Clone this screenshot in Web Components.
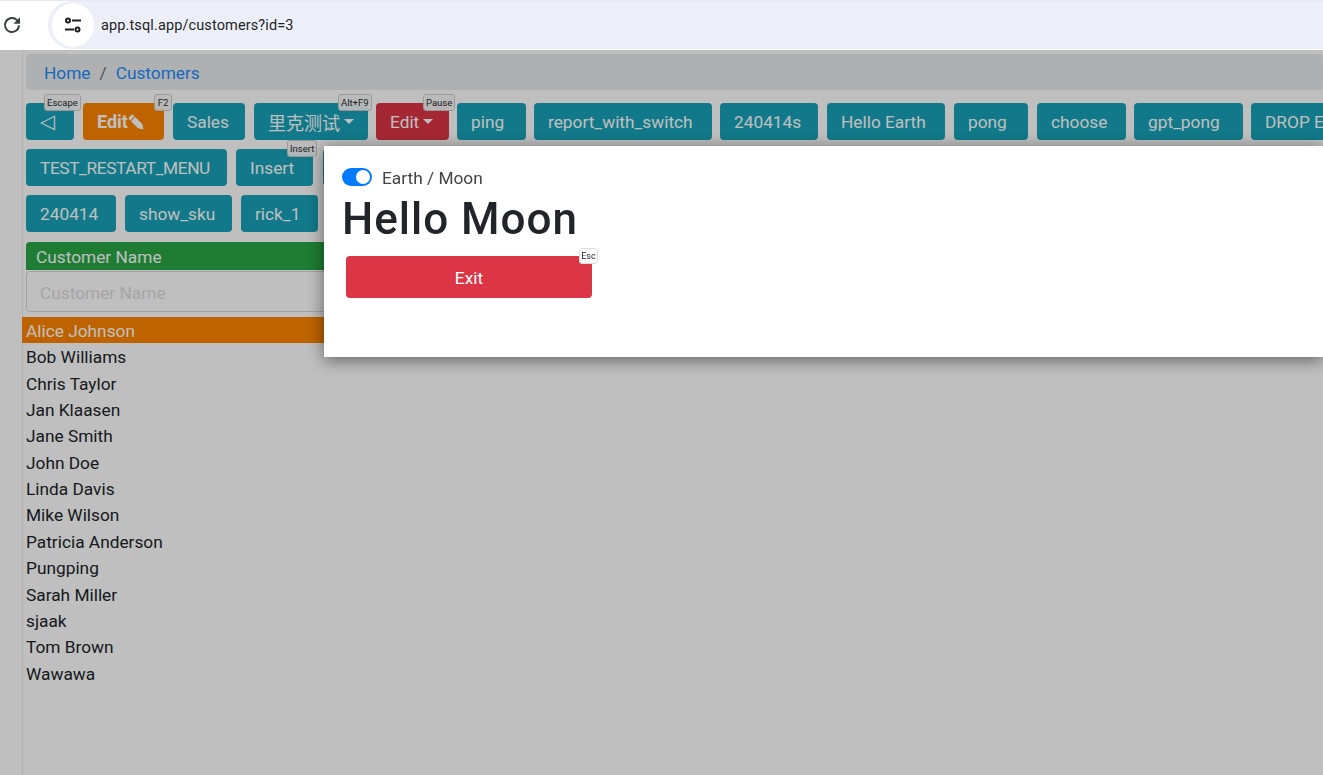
<!DOCTYPE html>
<html><head><meta charset="utf-8"><style>
html,body{margin:0;height:100%;overflow:hidden;background:#fff}
body{font-family:"Roboto","Noto Sans CJK SC",sans-serif;font-size:17.3px;color:#212529}
</style></head><body>
<browser-bar url="app.tsql.app/customers?id=3"></browser-bar>
<app-page>
  <bread-crumb slot="crumb"></bread-crumb>
  <button-row>
    <tsql-btn w="48" badge="Escape" bx="18"><span style="font:19.5px 'DejaVu Sans'">◁</span></tsql-btn>
    <tsql-btn w="81" kind="orange" badge="F2" bx="71"><b style="font-weight:700;font-size:18px">Edit</b><pencil-icon></pencil-icon></tsql-btn>
    <tsql-btn w="72">Sales</tsql-btn>
    <tsql-btn w="114" g="8" caret badge="Alt+F9" bx="84"><span style="font-size:18px">里克测试</span></tsql-btn>
    <tsql-btn w="73" g="8" kind="red" caret badge="Pause" bx="47">Edit</tsql-btn>
    <tsql-btn w="69" g="8">ping</tsql-btn>
    <tsql-btn w="178" g="8">report_with_switch</tsql-btn>
    <tsql-btn w="98">240414s</tsql-btn>
    <tsql-btn w="118">Hello Earth</tsql-btn>
    <tsql-btn w="74">pong</tsql-btn>
    <tsql-btn w="89" g="8">choose</tsql-btn>
    <tsql-btn w="109" g="8">gpt_pong</tsql-btn>
    <tsql-btn w="72" g="0" cut>DROP E</tsql-btn>
  </button-row>
  <button-row>
    <tsql-btn w="201"><span style="letter-spacing:-.4px">TEST_RESTART_MENU</span></tsql-btn>
    <tsql-btn w="77" g="10" badge="Insert" bx="51">Insert</tsql-btn>
    <tsql-btn w="90">Delete</tsql-btn>
  </button-row>
  <button-row>
    <tsql-btn w="90">240414</tsql-btn>
    <tsql-btn w="107">show_sku</tsql-btn>
    <tsql-btn w="77">rick_1</tsql-btn>
  </button-row>
  <search-field label="Customer Name"></search-field>
  <customer-list>
    <list-row active>Alice Johnson</list-row>
    <list-row>Bob Williams</list-row>
    <list-row>Chris Taylor</list-row>
    <list-row>Jan Klaasen</list-row>
    <list-row>Jane Smith</list-row>
    <list-row>John Doe</list-row>
    <list-row>Linda Davis</list-row>
    <list-row>Mike Wilson</list-row>
    <list-row>Patricia Anderson</list-row>
    <list-row>Pungping</list-row>
    <list-row>Sarah Miller</list-row>
    <list-row>sjaak</list-row>
    <list-row>Tom Brown</list-row>
    <list-row>Wawawa</list-row>
  </customer-list>
</app-page>
<modal-dialog></modal-dialog>
<script>
function def(name, html){
  customElements.define(name, class extends HTMLElement{
    constructor(){super();this.attachShadow({mode:'open'});}
    connectedCallback(){
      const a=n=>this.getAttribute(n);
      this.shadowRoot.innerHTML = typeof html==='function'?html(a,this):html;
    }
  });
}
def('browser-bar',a=>`<style>
:host{display:flex;height:50px;background:#fff;box-sizing:border-box;border-top:1px solid #e6e9f3;border-bottom:1px solid #fff}
.reload{width:24px;display:flex;align-items:center;justify-content:center;flex:none}
.omni{margin-left:24px;flex:1;background:#eceff8;display:flex;align-items:center;border-radius:24px 0 0 24px}
.chip{width:42px;height:44px;margin-left:4px;background:#fff;border-radius:50%;display:flex;align-items:center;justify-content:center;flex:none}
.url{margin-left:7px;font:14.5px "Roboto","Liberation Sans",sans-serif;color:#1f1f1f;letter-spacing:.12px}
</style>
<div class="reload"><svg width="18" height="18" viewBox="0 0 18 18" fill="none" stroke="#3c4043" stroke-width="2"><path d="M16 9.4A7 7 0 1 1 14 4.1L16 6"/><path d="M17 1.2v6.6h-6.6z" fill="#3c4043" stroke="none"/></svg></div>
<div class="omni"><div class="chip"><svg width="18" height="16" viewBox="0 0 18 16" fill="none" stroke="#1f1f1f" stroke-width="2"><circle cx="4" cy="3.5" r="2"/><path d="M8 3.5h9M1 12.5h9"/><circle cx="13.5" cy="12.5" r="2"/></svg></div><div class="url">${a('url')}</div></div>`);
def('app-page',`<style>
:host{display:block;box-sizing:border-box;height:725px;margin-left:22px;border-left:1px solid #eee;padding:4px 0 0 3px}
</style><slot name="crumb"></slot><slot></slot>`);
def('bread-crumb',`<style>
:host{display:flex;align-items:center;gap:9px;height:36px;box-sizing:border-box;padding:1px 0 0 18px;background:#e9ebee;border-radius:4px;margin-bottom:13px;color:#6c757d}
a{color:#1b8bff;text-decoration:none}
</style><a href="#">Home</a><span>/</span><a href="#">Customers</a>`);
def('button-row',`<style>
:host{display:flex;margin-bottom:9px}
</style><slot></slot>`);
def('tsql-btn',a=>{
 const k=a('kind'),bg=k==='orange'?'#ff8500':k==='red'?'#dc3545':'#17a2b8',c=a('cut')!==null;
 return `<style>
:host{display:flex;flex:none;position:relative;box-sizing:border-box;width:${a('w')}px;margin-right:${a('g')||9}px;height:37px;padding-left:14px;background:${bg};border-radius:${c?'4px 0 0 4px':'4px'};color:#fff;align-items:center;white-space:nowrap;${c?'overflow:hidden;':''}}
.badge{position:absolute;left:${a('bx')}px;top:-9px;height:17px;min-width:18px;text-align:center;padding:0 2px;font:9.5px/15px "Roboto",sans-serif;color:#212529;background:#f8f9fa;border:1px solid #ccc;border-radius:3px;opacity:.95;box-sizing:border-box}
.caret{display:inline-block;margin-left:4px;border-top:5px solid #fff;border-left:5px solid transparent;border-right:5px solid transparent}
</style><slot></slot>${a('caret')!==null?'<span class="caret"></span>':''}${a('badge')?`<span class="badge">${a('badge')}</span>`:''}`});
def('pencil-icon',`<style>:host{display:inline-flex}</style><svg width="16" height="16" viewBox="0 0 16 16"><path d="M.8 3.6 3.6.8Q4.4.2 5.2 1L6.4 2.2 2.2 6.4 1 5.2Q.2 4.4.8 3.6zM3 7.2 7.2 3l7 7 1.3 5.5-5.5-1.3z" fill="#fff"/></svg>`);
def('search-field',a=>`<style>
:host{display:block;padding-top:1px}
.l{height:28px;background:#28a745;color:#fff;border-radius:4px 4px 0 0;padding-left:10px;line-height:30px;box-sizing:border-box}
.i{height:41px;margin-top:1px;border:1px solid #d8d8d8;border-radius:4px;padding-left:13px;line-height:42px;box-sizing:border-box;color:#dcdcdc;background:#fff}
</style><div class="l">${a('label')}</div><div class="i">${a('label')}</div>`);
def('customer-list',`<style>:host{display:block;margin:4.8px 0 0 -4px}</style><slot></slot>`);
def('list-row',a=>`<style>
:host{display:block;height:26.38px;line-height:28px;padding-left:4px;${a('active')!==null?'background:#ff8500;color:#fff':''}}
</style><slot></slot>`);
def('toggle-switch',`<style>
:host{display:inline-block;position:relative;width:30px;height:18px;background:#007bff;border-radius:9px;flex:none}
i{position:absolute;right:2px;top:2px;width:14px;height:14px;border-radius:50%;background:#fff}
</style><i></i>`);
def('modal-dialog',`<style>
:host{display:block;position:fixed;inset:50px 0 0 0;background:rgba(0,0,0,.25)}
.m{position:absolute;left:324px;top:96px;right:0;height:211px;background:#fff;box-shadow:0 3px 16px rgba(0,0,0,.5);box-sizing:border-box;padding:22px 0 0 18px}
.t{display:flex;align-items:center;gap:10px;height:18px;color:#444}
.t span{position:relative;top:1px}
h1{margin:10px 0 0 0;font-size:44px;font-weight:500;line-height:47px;color:#212529;letter-spacing:1px}
.x{position:relative;margin:13px 0 0 4px;width:246px;height:42px;box-sizing:border-box;padding-top:1px;background:#dc3545;color:#fff;border-radius:4px;display:flex;align-items:center;justify-content:center}
.b{position:absolute;right:-6px;top:-8px;height:16px;width:19px;text-align:center;font-size:9px;line-height:14px;color:#212529;background:#fff;border:1px solid #ddd;border-radius:3px;box-sizing:border-box}
</style><div class="m"><div class="t"><toggle-switch></toggle-switch><span>Earth / Moon</span></div><h1>Hello Moon</h1><div class="x">Exit<span class="b">Esc</span></div></div>`);
</script></body></html>
